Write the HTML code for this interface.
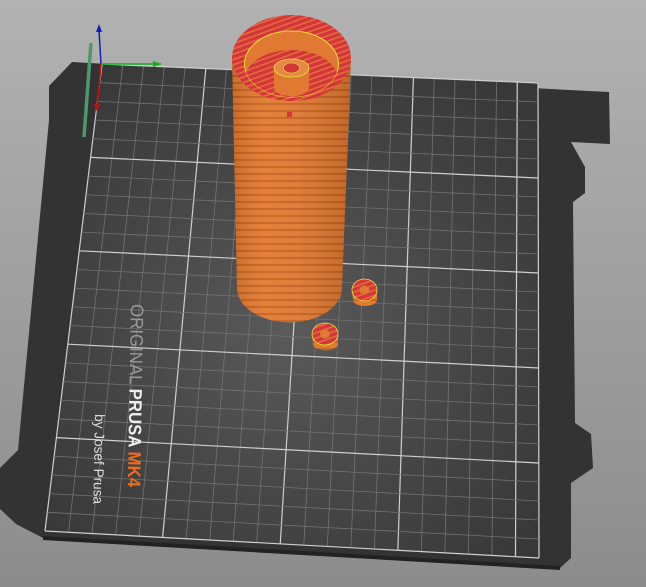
<!DOCTYPE html>
<html><head><meta charset="utf-8"><style>
html,body{margin:0;padding:0;width:646px;height:587px;overflow:hidden;background:linear-gradient(#b2b2b2,#8c8c8c);}
svg{display:block}
</style></head><body>
<svg id="s" width="646" height="587" viewBox="0 0 646 587" xmlns="http://www.w3.org/2000/svg">
<defs>
<radialGradient id="bedg" cx="290" cy="330" r="320" gradientUnits="userSpaceOnUse">
<stop offset="0" stop-color="#5a5a5a"/><stop offset="0.6" stop-color="#444"/><stop offset="1" stop-color="#383838"/>
</radialGradient>
<pattern id="stripes" width="10" height="7" patternUnits="userSpaceOnUse">
<rect width="10" height="7" fill="#e27a30"/><rect y="5" width="10" height="2" fill="#c9621f"/>
</pattern>
<linearGradient id="shade" x1="0" x2="1">
<stop offset="0" stop-color="#000" stop-opacity="0.12"/><stop offset="0.3" stop-color="#fff" stop-opacity="0.05"/><stop offset="1" stop-color="#000" stop-opacity="0.15"/>
</linearGradient>
<pattern id="redst" width="5" height="5" patternUnits="userSpaceOnUse" patternTransform="rotate(70)">
<rect width="5" height="5" fill="#d6353c"/><rect width="1.5" height="5" fill="#e0703a"/>
</pattern>
<clipPath id="open"><ellipse cx="291.5" cy="64" rx="47" ry="33"/></clipPath>
</defs>
<polygon fill="#333" points="72,62 569,90 609,92 610,144 571,142 585,167 585,193 573,202 575,423 591,434 593,468 571,483 571,558 560,568 43,538 16,524 0,509 0,468 18,450 49,120 49,86"/>
<polygon fill="#222" points="43,536 560,566 560,570 43,540"/>
<polygon fill="url(#bedg)" points="102,64 538,83 539,558 45,531"/>
<g id="grid"></g>
<g font-family="Liberation Sans, sans-serif">
<text transform="translate(131,304) rotate(91)" font-size="18" textLength="183" lengthAdjust="spacingAndGlyphs"><tspan fill="#9a9a9a">ORIGINAL </tspan><tspan fill="#eeeeee" font-weight="bold">PRUSA </tspan><tspan fill="#f26b1d" font-weight="bold">MK4</tspan></text>
<text transform="translate(95,414) rotate(91)" font-size="14" fill="#ddd" textLength="90" lengthAdjust="spacingAndGlyphs">by Josef Prusa</text>
</g>
<path d="M232,58 L237,288 A52,34 0 0 0 342,288 L351,58 Z" fill="url(#stripes)"/>
<path d="M232,58 L237,288 A52,34 0 0 0 342,288 L351,58 Z" fill="url(#shade)"/>
<ellipse cx="291.5" cy="58" rx="59.5" ry="43" fill="url(#redst)"/>
<ellipse cx="291.5" cy="64" rx="47" ry="33" fill="#e07a33" stroke="#e6e030" stroke-width="1"/>
<g clip-path="url(#open)">
<ellipse cx="291.5" cy="80" rx="47" ry="30" fill="url(#redst)"/>
<path d="M274,68 L274,88 A17.5,8 0 0 0 309,88 L309,68 Z" fill="#e07a33"/>
<ellipse cx="291.5" cy="68" rx="17.5" ry="9" fill="#e58a45" stroke="#e6e030" stroke-width="0.8"/>
<ellipse cx="291.5" cy="68" rx="8" ry="5" fill="#d6353c" stroke="#e6e030" stroke-width="0.6"/>
</g>
<rect x="287" y="112" width="5" height="5" fill="#d6353c"/>
<path d="M352,290 L353,300 A12,6 0 0 0 377,300 L377,290 Z" fill="url(#stripes)"/>
<ellipse cx="364.5" cy="290" rx="12.5" ry="11" fill="url(#redst)" stroke="#e6e030" stroke-width="0.8"/>
<ellipse cx="364.5" cy="290" rx="5" ry="4.5" fill="#e07a33"/>
<path d="M312,334 L313,344 A12,6 0 0 0 338,344 L338,334 Z" fill="url(#stripes)"/>
<ellipse cx="325" cy="334" rx="13" ry="11" fill="url(#redst)" stroke="#e6e030" stroke-width="0.8"/>
<ellipse cx="325" cy="334" rx="5" ry="4.5" fill="#e07a33"/>
<line x1="91" y1="43" x2="84" y2="137" stroke="#4a9a6e" stroke-width="3.5"/>
<line x1="99" y1="30" x2="101" y2="64" stroke="#1020b0" stroke-width="1.5"/>
<polygon points="96,32 99,24 102,32" fill="#1020b0"/>
<line x1="101" y1="64" x2="161" y2="64" stroke="#10b020" stroke-width="1.5"/>
<polygon points="153,61 162,64 153,67" fill="#10b020"/>
<line x1="101" y1="64" x2="97" y2="110" stroke="#c01010" stroke-width="1.5"/>
<polygon points="94,104 97,112 100,104" fill="#c01010"/>
</svg>
<script>
(function(){
var TL=[102,64],TR=[538,83],BR=[539,558],BL=[45,531];
function P(u,v){var x=(1-u)*(1-v)*TL[0]+u*(1-v)*TR[0]+u*v*BR[0]+(1-u)*v*BL[0];
var y=(1-u)*(1-v)*TL[1]+u*(1-v)*TR[1]+u*v*BR[1]+(1-u)*v*BL[1];return [x,y];}
var g=document.getElementById('grid'),h='';
var NX=21,NY=25;
for(var i=0;i<=NX;i++){var a=P(i/NX,0),b=P(i/NX,1);var br=(i%5==0||i==NX);
h+='<line x1="'+a[0]+'" y1="'+a[1]+'" x2="'+b[0]+'" y2="'+b[1]+'" stroke="'+(br?'#cfcfcf':'#727272')+'" stroke-width="'+(br?1.2:0.8)+'"/>';}
for(var j=0;j<=NY;j++){var a=P(0,j/NY),b=P(1,j/NY);var br=(j%5==0);
h+='<line x1="'+a[0]+'" y1="'+a[1]+'" x2="'+b[0]+'" y2="'+b[1]+'" stroke="'+(br?'#cfcfcf':'#727272')+'" stroke-width="'+(br?1.2:0.8)+'"/>';}
g.innerHTML=h;
})();
</script>
</body></html>
